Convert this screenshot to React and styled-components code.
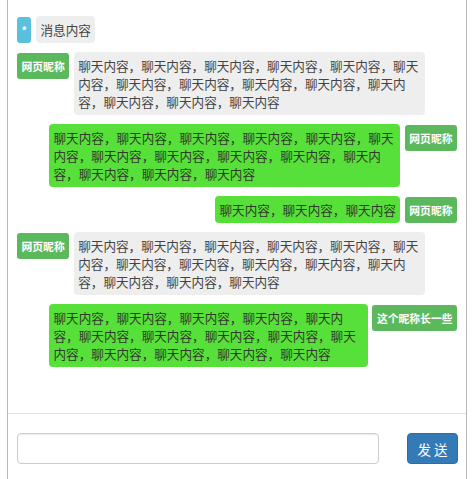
import React from 'react';
import styled, { createGlobalStyle } from 'styled-components';

const GlobalStyle = createGlobalStyle`
  html, body {
    margin: 0;
    padding: 0;
    background: #fff;
    overflow: hidden;
  }

  body {
    font-family: "Noto Sans CJK SC", "Liberation Sans", sans-serif;
  }
`;

const Panel = styled.div`
  box-sizing: border-box;
  width: 460px;
  height: 479px;
  margin-left: 7px;
  border-left: 1px solid #b8b8b8;
  border-right: 1px solid #b8b8b8;
  display: flex;
  flex-direction: column;
`;

const MessageList = styled.div`
  box-sizing: border-box;
  height: 414px;
  padding: 16px 9px 0;
  border-bottom: 1px solid #e3e3e3;
  display: flex;
  flex-direction: column;
  gap: 9px;
  overflow: hidden;
`;

const Row = styled.div`
  display: flex;
  flex-direction: ${(p) => (p.$mine ? 'row-reverse' : 'row')};
  align-items: flex-start;
  gap: 4.5px;
  padding-left: ${(p) => (p.$mine ? '32px' : '0')};
  padding-right: ${(p) => (p.$mine ? '0' : '32px')};
`;

const Nick = styled.span`
  flex: 0 0 auto;
  padding: 4px 4.5px;
  margin-top: 1px;
  border-radius: 3px;
  background: ${(p) => (p.$info ? '#5bc0de' : '#5cb85c')};
  color: #fff;
  font-size: 10.8px;
  font-weight: 700;
  line-height: 18px;
  white-space: nowrap;
`;

const Bubble = styled.div`
  flex: 0 1 auto;
  min-width: 0;
  padding: 4.5px;
  border-radius: 4px;
  background: ${(p) => (p.$mine ? '#58e03a' : '#eeeeee')};
  color: ${(p) => (p.$mine ? '#2f3b2a' : '#444')};
  font-size: 12.6px;
  line-height: 18px;
`;

const Footer = styled.div`
  display: flex;
  align-items: center;
  gap: 28px;
  padding: 19px 8px 0 9px;
`;

const Input = styled.input`
  box-sizing: border-box;
  flex: 1;
  height: 31px;
  padding: 4px 8px;
  border: 1px solid #cccccc;
  border-radius: 4px;
  box-shadow: inset 0 1px 1px rgba(0, 0, 0, 0.075);
  font-family: inherit;
  font-size: 12.6px;
  outline: none;
`;

const SendButton = styled.button`
  box-sizing: border-box;
  width: 51px;
  height: 31px;
  padding: 0 0 0 3px;
  border: 1px solid #2e6da4;
  border-radius: 4px;
  background: #337ab7;
  color: #fff;
  font-family: inherit;
  font-size: 13.5px;
  letter-spacing: 3px;
  cursor: pointer;
`;

const longText = Array(14).fill('聊天内容').join('，');

const messages = [
  { nick: '*', info: true, text: '消息内容' },
  { nick: '网页昵称', text: longText },
  { nick: '网页昵称', mine: true, text: longText },
  { nick: '网页昵称', mine: true, text: Array(3).fill('聊天内容').join('，') },
  { nick: '网页昵称', text: longText },
  { nick: '这个昵称长一些', mine: true, text: longText },
];

const App = () => {
  return (
    <>
      <GlobalStyle />
      <Panel>
        <MessageList>
          {messages.map((m, i) => (
            <Row key={i} $mine={m.mine}>
              <Nick $info={m.info}>{m.nick}</Nick>
              <Bubble $mine={m.mine}>{m.text}</Bubble>
            </Row>
          ))}
        </MessageList>
        <Footer>
          <Input type="text" />
          <SendButton type="button">发送</SendButton>
        </Footer>
      </Panel>
    </>
  );
};

export default App;
